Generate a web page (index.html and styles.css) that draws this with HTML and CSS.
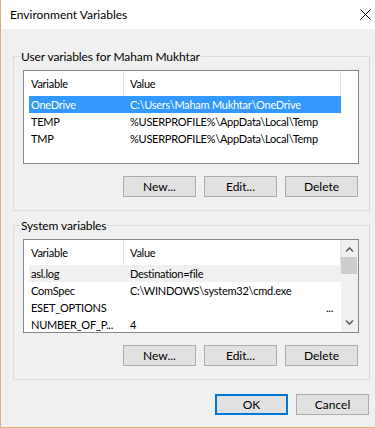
FILE: index.html
```html
<!DOCTYPE html>
<html lang="en">
<head>
    <meta charset="UTF-8">
    <meta name="viewport" content="width=device-width, initial-scale=1.0">
    <title>Environment Variables</title>
    <link rel="stylesheet" href="styles.css">
</head>
<body>

<div class="window">
    <div class="titlebar">
        <span class="title">Environment Variables</span>
        <svg class="close" width="11" height="11" viewBox="0 0 11 11">
            <path d="M0.5 0.5 L10.5 10.5 M10.5 0.5 L0.5 10.5" stroke="#000" stroke-width="1" fill="none"/>
        </svg>
    </div>

    <!-- Kullanici degiskenleri -->
    <div class="group">
        <div class="group-title">User variables for Maham Mukhtar</div>
        <div class="listview">
            <div class="cols">
                <div class="row head">
                    <div class="cell name">Variable</div>
                    <div class="cell value">Value</div>
                </div>
                <div class="row selected">
                    <div class="cell name">OneDrive</div>
                    <div class="cell value">C:\Users\Maham Mukhtar\OneDrive</div>
                </div>
                <div class="row">
                    <div class="cell name">TEMP</div>
                    <div class="cell value">%USERPROFILE%\AppData\Local\Temp</div>
                </div>
                <div class="row">
                    <div class="cell name">TMP</div>
                    <div class="cell value">%USERPROFILE%\AppData\Local\Temp</div>
                </div>
            </div>
        </div>
        <div class="buttons">
            <button class="btn">New...</button>
            <button class="btn">Edit...</button>
            <button class="btn">Delete</button>
        </div>
    </div>

    <!-- Sistem degiskenleri -->
    <div class="group second">
        <div class="group-title">System variables</div>
        <div class="listview">
            <div class="cols">
                <div class="row head">
                    <div class="cell name">Variable</div>
                    <div class="cell value">Value</div>
                </div>
                <div class="row inactive">
                    <div class="cell name">asl.log</div>
                    <div class="cell value">Destination=file</div>
                </div>
                <div class="row">
                    <div class="cell name">ComSpec</div>
                    <div class="cell value">C:\WINDOWS\system32\cmd.exe</div>
                </div>
                <div class="row">
                    <div class="cell name">ESET_OPTIONS</div>
                    <div class="cell value dots">...</div>
                </div>
                <div class="row">
                    <div class="cell name">NUMBER_OF_P...</div>
                    <div class="cell value">4</div>
                </div>
            </div>
            <div class="scrollbar">
                <div class="arrow">
                    <svg width="17" height="17" viewBox="0 0 17 17">
                        <polyline points="5,11.5 8.5,8 12,11.5" stroke="#606060" stroke-width="1.6" fill="none"/>
                    </svg>
                </div>
                <div class="thumb"></div>
                <div class="track"></div>
                <div class="arrow">
                    <svg width="17" height="17" viewBox="0 0 17 17">
                        <polyline points="5,5.5 8.5,9 12,5.5" stroke="#606060" stroke-width="1.6" fill="none"/>
                    </svg>
                </div>
            </div>
        </div>
        <div class="buttons">
            <button class="btn">New...</button>
            <button class="btn">Edit...</button>
            <button class="btn">Delete</button>
        </div>
    </div>

    <div class="dialog-buttons">
        <button class="btn default">OK</button>
        <button class="btn">Cancel</button>
    </div>
</div>

</body>
</html>
```

FILE: styles.css
```css
/* Pencere */
body {
    margin: 0;
    padding: 0;
    background-color: #f0f0f0;
    font-family: Lato, "Liberation Sans", sans-serif;
    font-size: 12px;
    color: #000;
}
.window {
    width: 375px;
    height: 428px;
    box-sizing: border-box;
    border-left: 1px solid #dcb27a;
    border-bottom: 1px solid #dcb27a;
    background-color: #f0f0f0;
    overflow: hidden;
}
.titlebar {
    height: 29px;
    background-color: #ffffff;
    display: flex;
    align-items: center;
    justify-content: space-between;
    padding: 0 4px 0 9px;
}
.title {
    margin-top: -1px;
}
.close {
    display: block;
    margin-top: -1px;
}

/* Grup kutulari */
.group {
    border: 1px solid #dcdcdc;
    margin: 27px 5px 0 12px;
    padding: 0 10px 13px 9px;
}
.group.second {
    margin-top: 14px;
}
.group-title {
    width: fit-content;
    margin: -8px 0 0 -3px;
    padding: 0 1px;
    line-height: 15px;
    background-color: #f0f0f0;
    letter-spacing: -0.1px;
}

/* Liste */
.listview {
    margin-top: 6px;
    height: 94px;
    box-sizing: border-box;
    border: 1px solid #828790;
    background-color: #ffffff;
    display: flex;
    padding-left: 5px;
    font-size: 11px;
    letter-spacing: -0.25px;
}
.cols {
    width: 312px;
}
.row {
    display: flex;
    height: 17px;
    line-height: 17px;
}
.row.head {
    height: 25px;
    line-height: 25px;
}
.cell {
    white-space: nowrap;
    overflow: hidden;
    box-sizing: border-box;
}
.name {
    width: 94px;
    padding-left: 2px;
}
.value {
    width: 218px;
    padding-left: 6px;
    border-left: 1px solid transparent;
    border-right: 1px solid transparent;
}
.head .value {
    border-color: #e5e5e5;
}
.row.selected {
    background-color: #3399ff;
    color: #ffffff;
}
.row.inactive {
    background-color: #f0f0f0;
}
.dots {
    text-align: right;
    padding-right: 7px;
}

/* Kaydirma cubugu */
.scrollbar {
    width: 17px;
    background-color: #f0f0f0;
    display: flex;
    flex-direction: column;
}
.arrow {
    height: 17px;
}
.arrow svg {
    display: block;
}
.thumb {
    height: 17px;
    margin-right: 1px;
    background-color: #cdcdcd;
}
.track {
    flex: 1;
}

/* Dugmeler */
.buttons {
    display: flex;
    justify-content: flex-end;
    gap: 8px;
    margin-top: 12px;
    padding-right: 1px;
}
.btn {
    width: 73px;
    height: 21px;
    box-sizing: border-box;
    padding: 0;
    background-color: #e1e1e1;
    border: 1px solid #adadad;
    font-family: Lato, "Liberation Sans", sans-serif;
    font-size: 12px;
    color: #000;
}
.btn.default {
    border: 2px solid #0078d7;
}
.dialog-buttons {
    display: flex;
    justify-content: flex-end;
    gap: 8px;
    margin: 14px 6px 0 0;
}
```
